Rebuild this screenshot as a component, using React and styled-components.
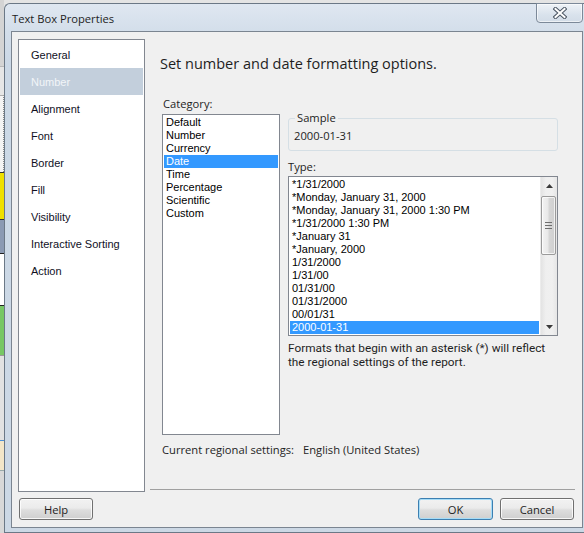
import React from 'react';
import styled, { createGlobalStyle } from 'styled-components';

const SEGOE = '"Open Sans", "Noto Sans", sans-serif';
const MSSANS = '"Liberation Sans", Arial, sans-serif';
const NOTEFONT = 'Roboto, "Open Sans", sans-serif';

const Global = createGlobalStyle`
  html, body { margin: 0; padding: 0; }
  body { background: #dedede; font-family: ${SEGOE}; }
  * { box-sizing: border-box; }
`;

const Screen = styled.div`
  width: 584px;
  height: 533px;
  display: flex;
  overflow: hidden;
  background: #e4e4e4;
`;

const Backdrop = styled.div`
  width: 4px;
  flex: none;
  display: flex;
  flex-direction: column;
  background: #d6d6d6;
`;

const Band = styled.div`
  flex: none;
  height: ${p => p.$h}px;
  background: ${p => p.$c};
  border-top: ${p => (p.$line ? `1px solid ${p.$line}` : 'none')};
  border-right: ${p => (p.$dotted ? '1px dotted #8a8a8a' : 'none')};
`;

const Window = styled.div`
  margin-top: 3px;
  width: 580px;
  height: 530px;
  flex: none;
  display: flex;
  flex-direction: column;
  border: 1px solid #6b7886;
  border-right: none;
  border-top-left-radius: 6px;
  background: linear-gradient(to bottom, #dfe7f1 0px, #d3deea 28px, #cbd8e6 60px, #ccd8e5 100%);
  padding: 0 1px 4px 6px;
`;

const TitleBar = styled.div`
  height: 27px;
  flex: none;
  display: flex;
  align-items: flex-start;
  justify-content: space-between;
  margin-left: -6px;
  padding-left: 7px;
`;

const Title = styled.div`
  font-family: ${SEGOE};
  font-size: 11.2px;
  color: #1e1e1e;
  line-height: 16px;
  margin-top: 7px;
`;

const CloseButton = styled.div`
  width: 47px;
  height: 20px;
  margin-top: -1px;
  border: 1px solid #7c8999;
  border-radius: 0 0 4px 4px;
  background: linear-gradient(to bottom, #eef2f7, #d9e2ec 60%, #d2dce7);
  box-shadow: inset 0 0 0 1px rgba(255, 255, 255, 0.6);
  display: flex;
  align-items: center;
  justify-content: center;
`;

const Client = styled.div`
  flex: 1;
  border: 1px solid #7b8591;
  background: #f0f0f0;
  display: flex;
  flex-direction: column;
  padding: 7px 0 7px 6px;
`;

const Body = styled.div`
  height: 453px;
  flex: none;
  display: flex;
  align-items: flex-start;
`;

const Nav = styled.div`
  width: 127px;
  height: 453px;
  flex: none;
  background: #fff;
  border: 1px solid #828790;
  padding: 1px;
`;

const NavItem = styled.div`
  height: 27px;
  line-height: 25px;
  padding-top: 2px;
  padding-left: 11px;
  font-family: ${MSSANS};
  font-size: 11px;
  color: ${p => (p.$sel ? '#f2f5f8' : '#10101e')};
  background: ${p => (p.$sel ? '#c3cfdc' : 'transparent')};
`;

const Pane = styled.div`
  flex: 1;
  height: 451px;
  margin-left: 5px;
  margin-right: 7px;
  border-bottom: 1px solid #a0a0a0;
  display: flex;
  flex-direction: column;
`;

const Heading = styled.div`
  font-family: ${SEGOE};
  font-size: 14.5px;
  line-height: 20px;
  color: #1e1e1e;
  margin: 15px 0 0 10px;
`;

const Columns = styled.div`
  display: flex;
  margin: 22px 0 0 12px;
  gap: 8px;
  align-items: flex-start;
`;

const Column = styled.div`
  display: flex;
  flex-direction: column;
  width: ${p => p.$w}px;
  flex: none;
`;

const Label = styled.div`
  font-family: ${SEGOE};
  font-size: 11.2px;
  line-height: 16px;
  color: #1e1e1e;
  padding-left: ${p => p.$pl || 0}px;
  margin-top: ${p => p.$mt || 0}px;
`;

const ListBox = styled.div`
  margin-top: ${p => p.$mt}px;
  height: ${p => p.$h}px;
  background: #fff;
  border: 1px solid #828790;
  display: flex;
  overflow: hidden;
`;

const Items = styled.div`
  flex: 1;
  padding: 1px;
  display: flex;
  flex-direction: column;
`;

const Item = styled.div`
  height: 13px;
  line-height: 13px;
  padding-left: 2px;
  font-family: ${MSSANS};
  font-size: 11px;
  white-space: nowrap;
  color: ${p => (p.$sel ? '#fff' : '#000')};
  background: ${p => (p.$sel ? '#3399ff' : 'transparent')};
`;

const ScrollBar = styled.div`
  width: 17px;
  flex: none;
  display: flex;
  flex-direction: column;
  background: linear-gradient(to right, #e3e3e3, #efefef 30%, #f0f0f0 70%, #e6e6e6);
  border-left: 1px solid #ececec;
`;

const ArrowBtn = styled.div`
  height: 17px;
  flex: none;
  display: flex;
  align-items: center;
  justify-content: center;
`;

const Track = styled.div`
  flex: 1;
  padding-top: 2px;
`;

const Thumb = styled.div`
  width: 15px;
  height: 59px;
  border: 1px solid #9a9a9a;
  border-radius: 2px;
  background: linear-gradient(to right, #f3f3f3, #e8e8e8 45%, #d6d6d6 55%, #cfcfcf);
  box-shadow: inset 0 0 0 1px rgba(255, 255, 255, 0.7);
  display: flex;
  align-items: center;
  justify-content: center;
`;

const Group = styled.fieldset`
  margin: 14px 0 0 0;
  padding: 0 0 6px 5px;
  border: 1px solid #d5dfe5;
  border-radius: 3px;
  min-width: 0;
`;

const Legend = styled.legend`
  font-family: ${SEGOE};
  font-size: 11.2px;
  line-height: 16px;
  color: #1e1e1e;
  padding: 0 2px;
  margin-left: 1px;
`;

const SampleValue = styled.div`
  font-family: ${SEGOE};
  font-size: 11.2px;
  line-height: 16px;
  color: #1e1e1e;
  margin-top: 2px;
`;

const Note = styled.div`
  font-family: ${NOTEFONT};
  font-size: 11.8px;
  line-height: 14px;
  color: #1e1e1e;
  margin-top: 5px;
  white-space: nowrap;
`;

const NoteLine = styled.div`
  height: 14px;
`;

const Regional = styled.div`
  display: flex;
  gap: 9px;
  margin: 7px 0 0 12px;
  font-family: ${SEGOE};
  font-size: 11.2px;
  line-height: 16px;
  color: #1e1e1e;
`;

const Footer = styled.div`
  display: flex;
  align-items: center;
  margin-top: 6px;
  padding-right: 8px;
  height: 22px;
`;

const Button = styled.div`
  width: ${p => p.$w || 75}px;
  height: 22px;
  margin-left: ${p => p.$ml || 0}px;
  border: 1px solid ${p => (p.$def ? '#3c7fb1' : '#707070')};
  border-radius: 3px;
  background: linear-gradient(to bottom, #f2f2f2 0%, #ebebeb 45%, #dddddd 55%, #cfcfcf 100%);
  box-shadow: inset 0 0 0 1px ${p => (p.$def ? '#a6dcf7' : 'rgba(255,255,255,0.8)')};
  display: flex;
  align-items: center;
  justify-content: center;
  font-family: ${SEGOE};
  font-size: 11.2px;
  color: #1e1e1e;
`;

const Spacer = styled.div`
  flex: 1;
`;

const navItems = ['General', 'Number', 'Alignment', 'Font', 'Border', 'Fill', 'Visibility', 'Interactive Sorting', 'Action'];
const categories = ['Default', 'Number', 'Currency', 'Date', 'Time', 'Percentage', 'Scientific', 'Custom'];
const types = [
  '*1/31/2000',
  '*Monday, January 31, 2000',
  '*Monday, January 31, 2000 1:30 PM',
  '*1/31/2000 1:30 PM',
  '*January 31',
  '*January, 2000',
  '1/31/2000',
  '1/31/00',
  '01/31/00',
  '01/31/2000',
  '00/01/31',
  '2000-01-31',
];

const CloseGlyph = () => (
  <svg width="14" height="12" viewBox="0 0 14 12">
    <path d="M2.5 2 L11.5 10 M11.5 2 L2.5 10" stroke="#4a5563" strokeWidth="4" strokeLinecap="square" />
    <path d="M2.5 2 L11.5 10 M11.5 2 L2.5 10" stroke="#ffffff" strokeWidth="2" strokeLinecap="square" />
  </svg>
);

const UpArrow = () => (
  <svg width="7" height="4" viewBox="0 0 7 4">
    <path d="M3.5 0 L7 4 L0 4 Z" fill="#3a3a3a" />
  </svg>
);

const DownArrow = () => (
  <svg width="7" height="4" viewBox="0 0 7 4">
    <path d="M0 0 L7 0 L3.5 4 Z" fill="#3a3a3a" />
  </svg>
);

const Grip = () => (
  <svg width="7" height="7" viewBox="0 0 7 7">
    <path d="M0 0.5 H7 M0 3.5 H7 M0 6.5 H7" stroke="#6e6e6e" strokeWidth="1" />
  </svg>
);

export default function App() {
  return (
    <>
      <Global />
      <Screen>
        <Backdrop>
          <Band $h={66} $c="#d4d4d4" />
          <Band $h={29} $c="#e6e6e6" $line="#b8b8b8" />
          <Band $h={77} $c="#f4f4f4" $line="#b0b0b0" $dotted />
          <Band $h={47} $c="#efe000" $line="#333" />
          <Band $h={34} $c="#8b9ab3" $line="#333" />
          <Band $h={52} $c="#ffffff" $line="#222" />
          <Band $h={50} $c="#77c765" $line="#222" />
          <Band $h={85} $c="#e2e2e2" $line="#999" />
          <Band $h={30} $c="#f3e6c8" $line="#4a90d9" />
          <Band $h={63} $c="#d8d8d8" $line="#9aa" />
        </Backdrop>
        <Window>
          <TitleBar>
            <Title>Text Box Properties</Title>
            <CloseButton>
              <CloseGlyph />
            </CloseButton>
          </TitleBar>
          <Client>
            <Body>
              <Nav>
                {navItems.map(n => (
                  <NavItem key={n} $sel={n === 'Number'}>{n}</NavItem>
                ))}
              </Nav>
              <Pane>
                <Heading>Set number and date formatting options.</Heading>
                <Columns>
                  <Column $w={118}>
                    <Label $pl={1}>Category:</Label>
                    <ListBox $mt={2} $h={321}>
                      <Items>
                        {categories.map(c => (
                          <Item key={c} $sel={c === 'Date'}>{c}</Item>
                        ))}
                      </Items>
                    </ListBox>
                  </Column>
                  <Column $w={270}>
                    <Group>
                      <Legend>Sample</Legend>
                      <SampleValue>2000-01-31</SampleValue>
                    </Group>
                    <Label $mt={8}>Type:</Label>
                    <ListBox $mt={1} $h={160}>
                      <Items>
                        {types.map((t, i) => (
                          <Item key={t} $sel={i === types.length - 1}>{t}</Item>
                        ))}
                      </Items>
                      <ScrollBar>
                        <ArrowBtn><UpArrow /></ArrowBtn>
                        <Track>
                          <Thumb><Grip /></Thumb>
                        </Track>
                        <ArrowBtn><DownArrow /></ArrowBtn>
                      </ScrollBar>
                    </ListBox>
                    <Note>
                      <NoteLine>Formats that begin with an asterisk (*) will reflect</NoteLine>
                      <NoteLine>the regional settings of the report.</NoteLine>
                    </Note>
                  </Column>
                </Columns>
                <Regional>
                  <span>Current regional settings:</span>
                  <span>English (United States)</span>
                </Regional>
              </Pane>
            </Body>
            <Footer>
              <Button $w={74} $ml={1}>Help</Button>
              <Spacer />
              <Button $def>OK</Button>
              <Button $w={74} $ml={7}>Cancel</Button>
            </Footer>
          </Client>
        </Window>
      </Screen>
    </>
  );
}
